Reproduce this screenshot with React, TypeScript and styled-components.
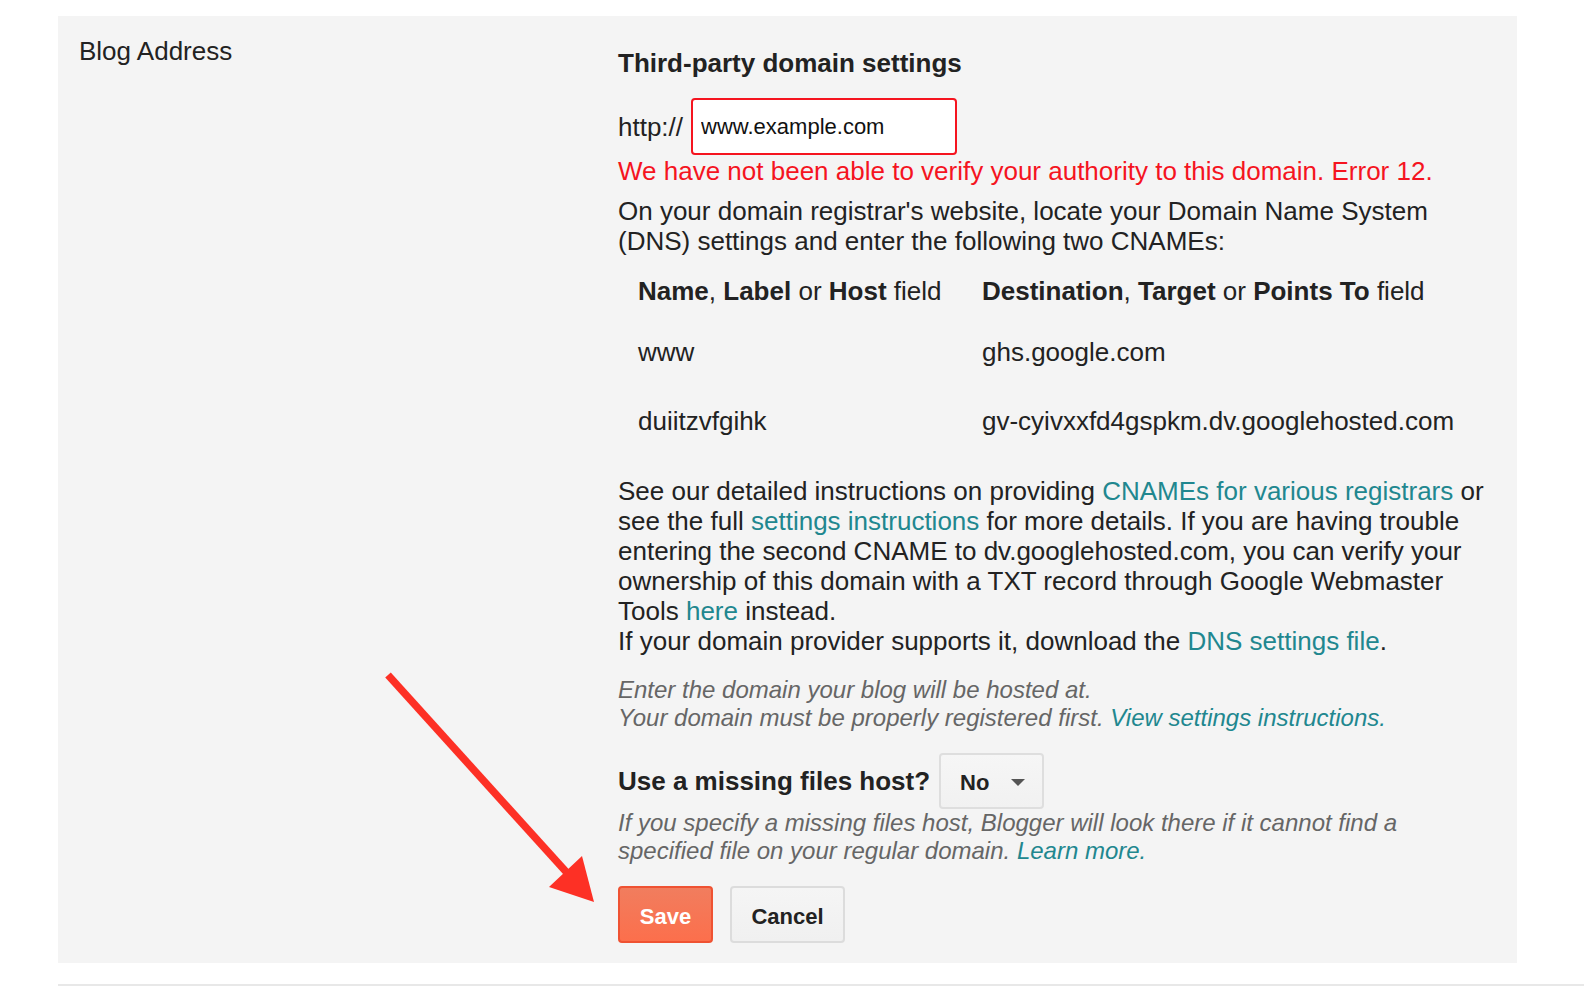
import React from 'react';
import styled, { createGlobalStyle } from 'styled-components';

const GlobalStyle = createGlobalStyle`
  html, body {
    margin: 0;
    padding: 0;
    background: #fff;
  }
  body {
    font-family: 'Liberation Sans', Arial, Helvetica, sans-serif;
    color: #222;
  }
`;

const Page = styled.div`
  padding: 16px 0 0 58px;
`;

const Panel = styled.section`
  position: relative;
  width: 1459px;
  display: flex;
  background: #f4f4f4;
  padding: 20px 0;
`;

const SectionLabel = styled.div`
  width: 560px;
  box-sizing: border-box;
  padding-left: 21px;
  font-size: 26px;
  line-height: 30px;
`;

const Content = styled.div`
  width: 875px;
  padding-top: 12px;
  font-size: 26px;
  line-height: 30px;
`;

const Title = styled.h3`
  margin: 0;
  font-size: 26px;
  line-height: 30px;
  font-weight: bold;
`;

const UrlRow = styled.div`
  display: flex;
  align-items: center;
  gap: 8px;
  margin-top: 20px;
  height: 57px;
`;

const UrlInput = styled.input`
  width: 266px;
  height: 57px;
  box-sizing: border-box;
  border: 2px solid #f5141f;
  border-radius: 4px;
  padding: 0 8px;
  font-family: inherit;
  font-size: 22px;
  color: #111;
  background: #fff;
  outline: none;
`;

const ErrorText = styled.div`
  margin-top: 1px;
  color: #f5141f;
`;

const Para = styled.p<{ $top: number }>`
  margin: ${p => p.$top}px 0 0;
`;

const Link = styled.a`
  color: #21878f;
  text-decoration: none;
  cursor: pointer;
`;

const RecordTable = styled.div`
  margin-top: 20px;
  padding-left: 20px;
`;

const RecordRow = styled.div<{ $space: number }>`
  display: grid;
  grid-template-columns: 344px auto;
  margin-top: ${p => p.$space}px;
`;

const Hint = styled.div<{ $top: number }>`
  margin-top: ${p => p.$top}px;
  font-size: 24px;
  line-height: 28px;
  font-style: italic;
  color: #666;
`;

const HostRow = styled.div`
  display: flex;
  align-items: center;
  gap: 9px;
  margin-top: 21px;
  font-weight: bold;
`;

const SelectBox = styled.div`
  width: 105px;
  height: 56px;
  box-sizing: border-box;
  display: flex;
  align-items: center;
  padding: 3px 0 0 19px;
  gap: 22px;
  border: 2px solid #dedede;
  border-radius: 4px;
  background: linear-gradient(#f6f6f6, #f1f1f1);
  font-size: 22px;
  font-weight: bold;
  color: #222;
`;

const Caret = styled.span`
  width: 0;
  height: 0;
  border-left: 7px solid transparent;
  border-right: 7px solid transparent;
  border-top: 7px solid #555;
`;

const Buttons = styled.div`
  display: flex;
  gap: 17px;
  margin-top: 21px;
`;

const Button = styled.button<{ $primary?: boolean }>`
  height: 57px;
  box-sizing: border-box;
  padding: 4px 0 0;
  width: ${p => (p.$primary ? '95px' : '115px')};
  border-radius: 4px;
  border: 2px solid ${p => (p.$primary ? '#ef5232' : '#dcdcdc')};
  background: ${p =>
    p.$primary
      ? 'linear-gradient(#f17d5e, #fc6f4c)'
      : 'linear-gradient(#f5f5f5, #f0f0f0)'};
  color: ${p => (p.$primary ? '#fff' : '#222')};
  font-family: inherit;
  font-size: 22px;
  font-weight: bold;
  cursor: pointer;
`;

const Divider = styled.div`
  margin-top: 21px;
  height: 2px;
  background: #e8e8e8;
`;

const ArrowLayer = styled.svg`
  position: absolute;
  left: 0;
  top: 0;
  width: 100%;
  height: 100%;
  pointer-events: none;
`;

const records = [
  { name: 'www', dest: 'ghs.google.com', space: 31 },
  { name: 'duiitzvfgihk', dest: 'gv-cyivxxfd4gspkm.dv.googlehosted.com', space: 39 },
];

export default function App() {
  return (
    <>
      <GlobalStyle />
      <Page>
        <Panel>
          <SectionLabel>Blog Address</SectionLabel>
          <Content>
            <Title>Third-party domain settings</Title>
            <UrlRow>
              <span>http://</span>
              <UrlInput defaultValue="www.example.com" />
            </UrlRow>
            <ErrorText>
              We have not been able to verify your authority to this domain. Error 12.
            </ErrorText>
            <Para $top={10}>
              On your domain registrar's website, locate your Domain Name System (DNS)
              settings and enter the following two CNAMEs:
            </Para>
            <RecordTable>
              <RecordRow $space={0}>
                <span>
                  <b>Name</b>, <b>Label</b> or <b>Host</b> field
                </span>
                <span>
                  <b>Destination</b>, <b>Target</b> or <b>Points To</b> field
                </span>
              </RecordRow>
              {records.map(r => (
                <RecordRow key={r.name} $space={r.space}>
                  <span>{r.name}</span>
                  <span>{r.dest}</span>
                </RecordRow>
              ))}
            </RecordTable>
            <Para $top={40}>
              See our detailed instructions on providing{' '}
              <Link>CNAMEs for various registrars</Link> or see the full{' '}
              <Link>settings instructions</Link> for more details. If you are having
              trouble entering the second CNAME to dv.googlehosted.com, you can verify
              your ownership of this domain with a TXT record through Google Webmaster
              Tools <Link>here</Link> instead.
              <br />
              If your domain provider supports it, download the{' '}
              <Link>DNS settings file</Link>.
            </Para>
            <Hint $top={20}>
              Enter the domain your blog will be hosted at.
              <br />
              Your domain must be properly registered first.{' '}
              <Link>View settings instructions.</Link>
            </Hint>
            <HostRow>
              <span>Use a missing files host?</span>
              <SelectBox>
                No <Caret />
              </SelectBox>
            </HostRow>
            <Hint $top={0}>
              If you specify a missing files host, Blogger will look there if it cannot
              find a specified file on your regular domain. <Link>Learn more.</Link>
            </Hint>
            <Buttons>
              <Button $primary>Save</Button>
              <Button>Cancel</Button>
            </Buttons>
          </Content>
          <ArrowLayer>
            <line
              x1="330"
              y1="659"
              x2="511"
              y2="859"
              stroke="#fd3025"
              strokeWidth="7.5"
            />
            <polygon points="536,886 491,871 524,840" fill="#fd3025" />
          </ArrowLayer>
        </Panel>
        <Divider />
      </Page>
    </>
  );
}
